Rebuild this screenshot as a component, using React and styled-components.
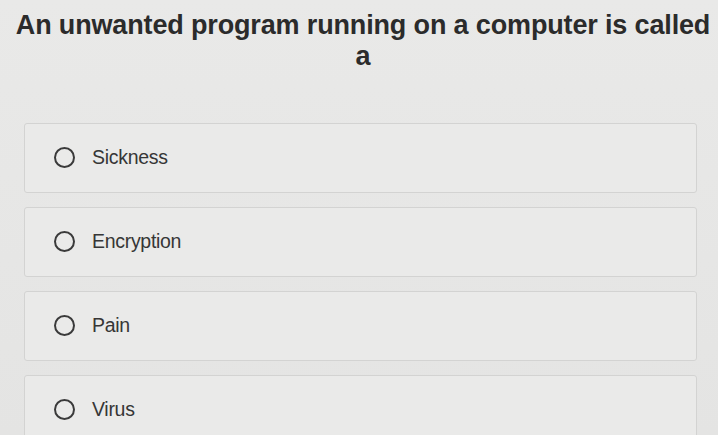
import React from "react";
import styled, { createGlobalStyle } from "styled-components";

const GlobalStyle = createGlobalStyle`
  html, body {
    margin: 0;
    padding: 0;
    background: #e7e7e6;
  }
  body {
    font-family: "Liberation Sans", Arial, sans-serif;
  }
`;

const Page = styled.div`
  width: 718px;
  height: 435px;
  overflow: hidden;
  padding-top: 10px;
  box-sizing: border-box;
  background: linear-gradient(180deg, #e9e9e8 0%, #e6e6e5 60%, #e4e4e3 100%);
`;

const Question = styled.h1`
  margin: 0 0 51px;
  font-size: 27px;
  line-height: 31px;
  font-weight: 700;
  letter-spacing: -0.15px;
  color: #2b2b2b;
  text-align: center;
  padding: 0 2px 0 10px;
`;

const Options = styled.div`
  display: flex;
  flex-direction: column;
  gap: 14px;
  padding: 0 21px 0 24px;
`;

const Option = styled.label`
  display: flex;
  align-items: center;
  gap: 17px;
  height: 70px;
  box-sizing: border-box;
  padding: 0 0 2px 29px;
  background: #eaeae9;
  border: 1px solid #d3d3d2;
  border-radius: 3px;
  cursor: pointer;
`;

const Radio = styled.span`
  width: 17px;
  height: 17px;
  border: 2.5px solid #3a3a3a;
  border-radius: 50%;
  flex-shrink: 0;
`;

const Label = styled.span`
  font-size: 19.5px;
  color: #363636;
  letter-spacing: -0.3px;
`;

const choices = ["Sickness", "Encryption", "Pain", "Virus"];

export default function App() {
  return (
    <>
      <GlobalStyle />
      <Page>
        <Question>
          An unwanted program running on a computer is called
          <br />a
        </Question>
        <Options>
          {choices.map((c) => (
            <Option key={c}>
              <Radio />
              <Label>{c}</Label>
            </Option>
          ))}
        </Options>
      </Page>
    </>
  );
}
